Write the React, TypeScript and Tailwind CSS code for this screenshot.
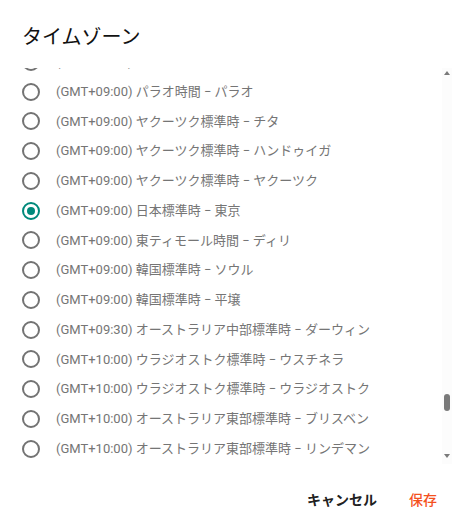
import React from "react";

const items: string[] = [
  "(GMT+09:00) インドネシア東部時間 − ジャヤプラ",
  "(GMT+09:00) パラオ時間 − パラオ",
  "(GMT+09:00) ヤクーツク標準時 − チタ",
  "(GMT+09:00) ヤクーツク標準時 − ハンドゥイガ",
  "(GMT+09:00) ヤクーツク標準時 − ヤクーツク",
  "(GMT+09:00) 日本標準時 − 東京",
  "(GMT+09:00) 東ティモール時間 − ディリ",
  "(GMT+09:00) 韓国標準時 − ソウル",
  "(GMT+09:00) 韓国標準時 − 平壌",
  "(GMT+09:30) オーストラリア中部標準時 − ダーウィン",
  "(GMT+10:00) ウラジオストク標準時 − ウスチネラ",
  "(GMT+10:00) ウラジオストク標準時 − ウラジオストク",
  "(GMT+10:00) オーストラリア東部標準時 − ブリスベン",
  "(GMT+10:00) オーストラリア東部標準時 − リンデマン",
  "(GMT+10:00) オーストラリア東部標準時 − メルボルン",
];

const SELECTED = 5;

function Radio({ checked }: { checked: boolean }) {
  return checked ? (
    <span className="flex h-[18px] w-[18px] shrink-0 items-center justify-center rounded-full border-2 border-[#00897b]">
      <span className="h-[8px] w-[8px] rounded-full bg-[#00897b]" />
    </span>
  ) : (
    <span className="h-[18px] w-[18px] shrink-0 rounded-full border-2 border-[#737373]" />
  );
}

export default function App() {
  return (
    <div className="flex h-[527px] w-[474px] flex-col overflow-hidden bg-white font-[Roboto,'Noto_Sans_CJK_JP',sans-serif]">
      <div className="h-[68px] shrink-0 pl-[22px] pt-[22px]">
        <h1 className="text-[20px] font-normal leading-[30px] text-[#111111]">タイムゾーン</h1>
      </div>
      <div className="relative h-[396px] shrink-0 overflow-hidden">
        <ul className="-mt-[21px]">
          {items.map((t, i) => (
            <li key={i} className="flex h-[29.75px] items-center gap-[16px] pl-[22px]">
              <Radio checked={i === SELECTED} />
              <span className="whitespace-nowrap text-[13px] text-[#757575]">{t}</span>
            </li>
          ))}
        </ul>
        <div className="absolute right-[22px] top-0 flex h-full w-[10px] flex-col items-center bg-[#fcfcfc]">
          <svg width="8" height="6" viewBox="0 0 8 6" className="mt-[2px]">
            <path d="M4 1 L7 5 L1 5 Z" fill="#7a7a7a" />
          </svg>
          <div className="mt-[318px] h-[17px] w-[6px] rounded-full bg-[#7a7a7a]" />
          <div className="flex-1" />
          <svg width="8" height="6" viewBox="0 0 8 6" className="mb-[5px]">
            <path d="M1 1 L7 1 L4 5 Z" fill="#7a7a7a" />
          </svg>
        </div>
      </div>
      <div className="flex flex-1 items-center justify-end gap-[32px] pr-[37px] pt-[9px] text-[14px]">
        <button className="font-bold text-[#212121]">キャンセル</button>
        <button className="font-medium text-[#f4511e]">保存</button>
      </div>
    </div>
  );
}
